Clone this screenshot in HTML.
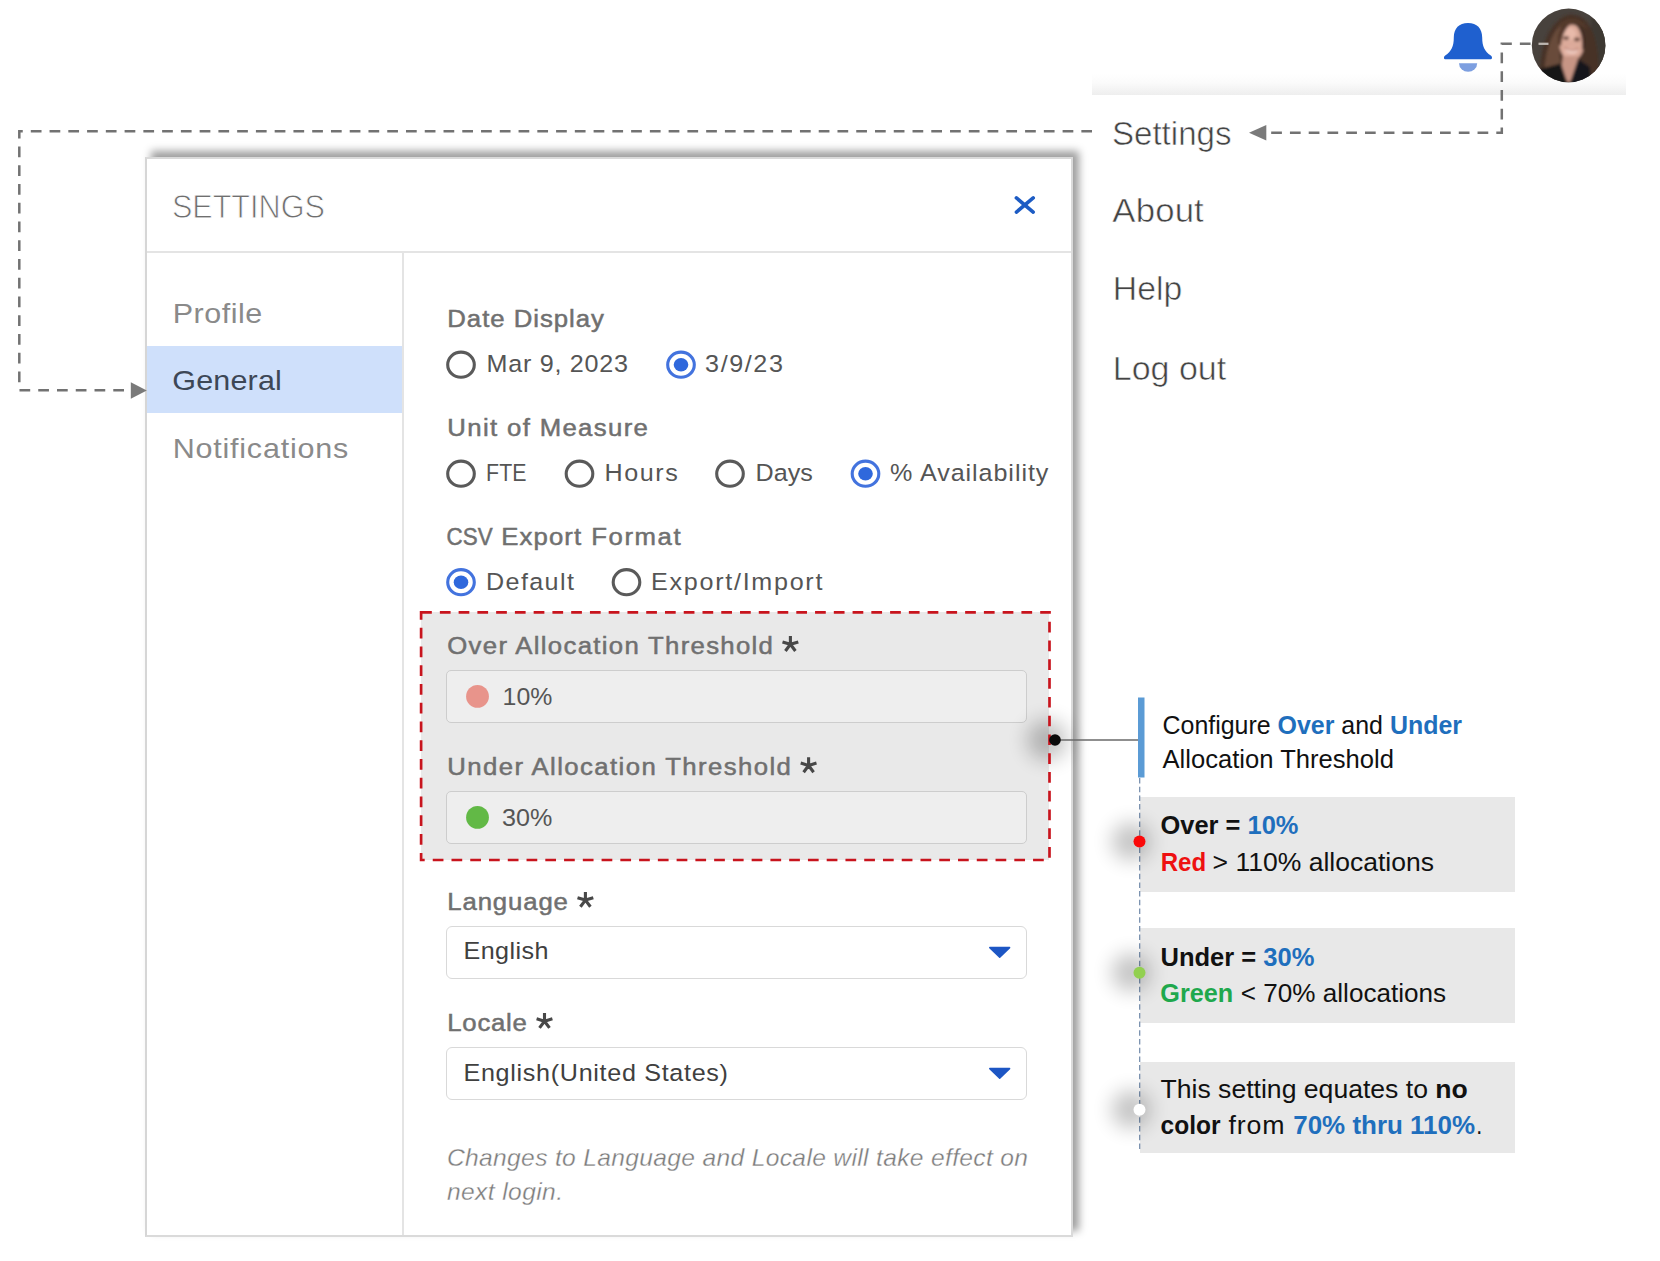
<!DOCTYPE html>
<html lang="en">
<head>
<meta charset="utf-8">
<title>Settings</title>
<style>
  html, body { margin:0; padding:0; background:#ffffff; }
  body { width:1660px; height:1261px; position:relative; overflow:hidden;
         font-family:"Liberation Sans", sans-serif; }
  .abs { position:absolute; }
  #topband { left:1092px; top:74px; width:534px; height:20.5px;
             background:linear-gradient(to bottom, #ffffff 0%, #fbfbfb 40%, #eeeeee 100%); }
  #dialog { left:145px; top:157px; width:923.5px; height:1076px; background:#fff;
            border:2px solid #dadada; border-left-color:#d6d6d6;
            box-shadow: 6px -6px 8px 0 rgba(0,0,0,0.38); }
  #dlg-head { left:147px; top:158.5px; width:923.5px; height:92px; border-bottom:2px solid #e4e4e4; background:#fff; }
  #side-border { left:402px; top:252px; width:2px; height:983px; background:#e4e4e4; }
  #side-active { left:147px; top:346px; width:255px; height:67px; background:#cfe0fb; }
  #redbox-fill { left:421px; top:612px; width:628px; height:248px; background:#e9e9e9; }
  .inp { left:446px; width:581px; height:51px; border:1px solid #cdcdcd; border-radius:5px; box-sizing:border-box; }
  .inp.g { background:#eeeeee; }
  .inp.w { background:#fff; border:1.5px solid #d9d9d9; border-radius:6px; }
  .note { left:1140px; width:375px; background:#e8e8e8; }
  svg#ov { left:0; top:0; }
  svg text { font-family:"Liberation Sans", sans-serif; }
</style>
</head>
<body>
<div class="abs" id="topband"></div>

<div class="abs" id="dialog"></div>
<div class="abs" id="dlg-head"></div>
<div class="abs" id="side-border"></div>
<div class="abs" id="side-active"></div>
<div class="abs" id="redbox-fill"></div>
<div class="abs inp g" style="top:670px; height:53px;"></div>
<div class="abs inp g" style="top:791px; height:53px;"></div>
<div class="abs inp w" style="top:925.7px; height:53px;"></div>
<div class="abs inp w" style="top:1046.7px; height:53px;"></div>

<div class="abs note" style="top:797px; height:95px;"></div>
<div class="abs note" style="top:928px; height:95px;"></div>
<div class="abs note" style="top:1062px; height:91px;"></div>

<svg id="ov" class="abs" width="1660" height="1261" viewBox="0 0 1660 1261">
  <defs>
    <filter id="blur1" x="-20%" y="-20%" width="140%" height="140%"><feGaussianBlur stdDeviation="1.6"/></filter>
    <filter id="blur10" x="-150%" y="-150%" width="400%" height="400%"><feGaussianBlur stdDeviation="10"/></filter>
    <clipPath id="avclip"><circle cx="1568.6" cy="45.4" r="36.8"/></clipPath>
  </defs>

  <!-- ===== connector dashed lines ===== -->
  <g fill="none" stroke="#727272" stroke-width="2.5" stroke-dasharray="10.72 8.04">
    <path d="M1260 132.8 H1501.8 V43.8 H1548" stroke-dashoffset="7.58"/>
    <path d="M140 390.2 H19.3 V131.2 H1092" stroke-dashoffset="2.76"/>
  </g>
  <path d="M1249 132.8 L1266.3 125 V140.6 Z" fill="#7a7a7a"/>
  <path d="M146.8 390.5 L130.8 382.3 V398.7 Z" fill="#7a7a7a"/>

  <!-- ===== bell ===== -->
  <g id="bell">
    <path d="M1459 63.2 H1477.2 A9.1 8.7 0 0 1 1459 63.2 Z" fill="#7d9fe0"/>
    <path d="M1445 59.2 C1443.6 59.2 1443.6 56.6 1445.2 55.6 C1451.4 51.2 1453.8 46.6 1453.8 37.5 C1453.8 28.4 1459 23 1468 23 C1477 23 1482.2 28.4 1482.2 37.5 C1482.2 46.6 1484.6 51.2 1490.8 55.6 C1492.4 56.6 1492.4 59.2 1491 59.2 Z" fill="#1f60cf"/>
  </g>

  <!-- ===== avatar ===== -->
  <g id="avatar" clip-path="url(#avclip)">
    <rect x="1530" y="6" width="78" height="80" fill="#48423d"/>
    <g filter="url(#blur1)">
      <path d="M1592 8 H1610 V88 H1588 Z" fill="#3c3733"/>
      <path d="M1540 88 C1537 60 1545 22 1568 15 C1593 11 1601 46 1598 88 Z" fill="#463126"/>
      <path d="M1545 80 C1543 56 1551 32 1563 22 C1558 40 1559 60 1563 80 Z" fill="#694b3b"/>
      <path d="M1556 30 C1560 16 1582 14 1588 30 C1580 23 1566 22 1556 30 Z" fill="#553a2c"/>
      <ellipse cx="1571.8" cy="42.6" rx="12.6" ry="17.8" fill="#dcaa9a"/>
      <ellipse cx="1568.5" cy="34" rx="7.5" ry="6.5" fill="#e8baaa"/>
      <ellipse cx="1570" cy="52" rx="7" ry="5" fill="#e3b3a4"/>
      <path d="M1558 44 C1557 30 1563 23 1573 22 C1566 27 1562 34 1561 46 Z" fill="#523729"/>
      <path d="M1585 48 C1587 34 1583 25 1573 22 C1580 28 1583 36 1582 50 Z" fill="#402c21"/>
      <path d="M1563 56 L1578 56 L1578 66 L1569 84 L1561 70 Z" fill="#c79585"/>
      <path d="M1534 88 L1540 69 L1561 63.5 L1569 88 Z" fill="#121215"/>
      <path d="M1578 59 L1590 67 L1591 88 L1566 88 L1571 80 Z" fill="#15151a"/>
      <ellipse cx="1566.2" cy="38" rx="3" ry="1.8" fill="#5e4036"/>
      <ellipse cx="1577" cy="39.4" rx="3" ry="1.8" fill="#5e4036"/>
      <path d="M1566 49.5 Q1571.5 54.5 1577.5 50.5" stroke="#f0d2c8" stroke-width="2" fill="none"/>
      <path d="M1564.5 47.5 Q1571 52 1578.5 48.5" stroke="#b67a6c" stroke-width="1.1" fill="none"/>
    </g>
  </g>
  <path d="M1538.5 43.8 H1548.5" stroke="#bdb6b0" stroke-width="2.3"/>

  <!-- ===== close X ===== -->
  <g stroke="#1d5cc4" stroke-width="3.6" stroke-linecap="round">
    <path d="M1016.4 197.9 L1033.2 212.1"/>
    <path d="M1033.2 197.9 L1016.4 212.1"/>
  </g>

  <!-- ===== asterisks ===== -->
  <g stroke="#484848" stroke-width="3.1" stroke-linecap="butt" fill="none">
    <path transform="translate(790.4 644.3)" d="M0 -8.2 V0 M0 0 L-7.9 -2.4 M0 0 L7.9 -2.4 M0 0 L-5 6.7 M0 0 L5 6.7"/>
    <path transform="translate(808.6 765.5)" d="M0 -8.2 V0 M0 0 L-7.9 -2.4 M0 0 L7.9 -2.4 M0 0 L-5 6.7 M0 0 L5 6.7"/>
    <path transform="translate(585.4 900.1)" d="M0 -8.2 V0 M0 0 L-7.9 -2.4 M0 0 L7.9 -2.4 M0 0 L-5 6.7 M0 0 L5 6.7"/>
    <path transform="translate(544.5 1021.2)" d="M0 -8.2 V0 M0 0 L-7.9 -2.4 M0 0 L7.9 -2.4 M0 0 L-5 6.7 M0 0 L5 6.7"/>
  </g>

  <!-- ===== radios ===== -->
  <g fill="#fff" stroke="#5a5a5a" stroke-width="3.1">
    <ellipse cx="461" cy="364.7" rx="13.3" ry="12.6"/>
    <ellipse cx="461" cy="473.7" rx="13.3" ry="12.6"/>
    <ellipse cx="579.5" cy="473.7" rx="13.3" ry="12.6"/>
    <ellipse cx="730" cy="473.7" rx="13.3" ry="12.6"/>
    <ellipse cx="626.5" cy="582.2" rx="13.3" ry="12.6"/>
  </g>
  <g fill="#fff" stroke="#4373de" stroke-width="3.1">
    <ellipse cx="681" cy="364.7" rx="13.3" ry="12.6"/>
    <ellipse cx="865.5" cy="473.7" rx="13.3" ry="12.6"/>
    <ellipse cx="461" cy="582.2" rx="13.3" ry="12.6"/>
  </g>
  <g fill="#2f68dc">
    <ellipse cx="681" cy="364.8" rx="7.3" ry="6.8"/>
    <ellipse cx="865.5" cy="473.8" rx="7.3" ry="6.8"/>
    <ellipse cx="461" cy="582.3" rx="7.3" ry="6.8"/>
  </g>

  <!-- ===== red dashed threshold box ===== -->
  <circle cx="1047" cy="740" r="20" fill="#000" opacity="0.24" filter="url(#blur10)"/>
  <rect x="421.1" y="612.4" width="628.4" height="247.6" fill="none" stroke="#c8141d" stroke-width="2.67" stroke-dasharray="10.72 8.04" stroke-dashoffset="0"/>
  <circle cx="477.5" cy="696.4" r="11.4" fill="#e8948b"/>
  <circle cx="477.5" cy="817.4" r="11.4" fill="#62b946"/>

  <!-- ===== select arrows ===== -->
  <path d="M989.8 947.6 H1009.6 L999.7 957.1 Z" fill="#1d56c4" stroke="#1d56c4" stroke-width="1.5" stroke-linejoin="round"/>
  <path d="M989.8 1068.6 H1009.6 L999.7 1078.1 Z" fill="#1d56c4" stroke="#1d56c4" stroke-width="1.5" stroke-linejoin="round"/>

  <!-- ===== callout ===== -->
  <path d="M1055 740 H1138" stroke="#6a6a6a" stroke-width="1.6"/>
  <circle cx="1055" cy="740" r="5.8" fill="#0a0a0a"/>
  <rect x="1138" y="697.5" width="6.5" height="80" fill="#5b9bd5"/>
  <path d="M1139.7 778 V1152" stroke="#6f88a8" stroke-width="1.2" stroke-dasharray="5.5 3.2"/>

  <circle cx="1131" cy="841.5" r="19" fill="#000" opacity="0.23" filter="url(#blur10)"/>
  <circle cx="1131" cy="972.5" r="19" fill="#000" opacity="0.23" filter="url(#blur10)"/>
  <circle cx="1131" cy="1109.5" r="19" fill="#000" opacity="0.23" filter="url(#blur10)"/>
  <circle cx="1139.5" cy="841.5" r="6" fill="#fb0909"/>
  <circle cx="1139.5" cy="972.7" r="6" fill="#92d050"/>
  <circle cx="1139.5" cy="1109.8" r="6" fill="#ffffff"/>

  <!-- ===== all text ===== -->
  <text transform="translate(1112 144.5) scale(1.0176 1)" font-size="32.5" fill="#444" stroke="#fff" stroke-width="0.55" paint-order="fill stroke">Settings</text>
  <text transform="translate(1112.3 221.5) scale(1.0700 1)" font-size="32.5" fill="#444" textLength="85.51" lengthAdjust="spacing" stroke="#fff" stroke-width="0.55" paint-order="fill stroke">About</text>
  <text transform="translate(1112.8 299.5) scale(1.0382 1)" font-size="32.5" fill="#444" stroke="#fff" stroke-width="0.55" paint-order="fill stroke">Help</text>
  <text transform="translate(1112.8 379.5) scale(1.0458 1)" font-size="32.5" fill="#444" stroke="#fff" stroke-width="0.55" paint-order="fill stroke">Log out</text>
  <text transform="translate(171.9 217.6) scale(0.8998 1)" font-size="34" fill="#6f6f6f" stroke="#fff" stroke-width="0.9" paint-order="fill stroke">SETTINGS</text>
  <text transform="translate(172.7 322.5) scale(1.0700 1)" font-size="28.5" fill="#8a8a8a" textLength="83.64" lengthAdjust="spacing">Profile</text>
  <text transform="translate(172.3 390.2) scale(1.0700 1)" font-size="28.5" fill="#3d4756" textLength="102.34" lengthAdjust="spacing">General</text>
  <text transform="translate(172.7 458) scale(1.0700 1)" font-size="28.5" fill="#8a8a8a" textLength="164.02" lengthAdjust="spacing">Notifications</text>
  <text transform="translate(447.3 327.3) scale(1.1000 1)" font-size="23.4" fill="#707070" textLength="142.36" lengthAdjust="spacing" stroke="#707070" stroke-width="0.5">Date Display</text>
  <text transform="translate(447.3 436.3) scale(1.1000 1)" font-size="23.4" fill="#707070" textLength="182.36" lengthAdjust="spacing" stroke="#707070" stroke-width="0.5">Unit of Measure</text>
  <text transform="translate(446.6 545.3) scale(0.9562 1)" font-size="23.4" fill="#707070" stroke="#707070" stroke-width="0.5">CSV</text>
  <text transform="translate(501.2 545.3) scale(1.1000 1)" font-size="23.4" fill="#707070" textLength="72.73" lengthAdjust="spacing" stroke="#707070" stroke-width="0.5">Export</text>
  <text transform="translate(591.2 545.3) scale(1.1000 1)" font-size="23.4" fill="#707070" textLength="81.27" lengthAdjust="spacing" stroke="#707070" stroke-width="0.5">Format</text>
  <text transform="translate(447.3 653.9) scale(1.1000 1)" font-size="23.4" fill="#707070" textLength="296.00" lengthAdjust="spacing" stroke="#707070" stroke-width="0.5">Over Allocation Threshold</text>
  <text transform="translate(447.3 775.1) scale(1.1000 1)" font-size="23.4" fill="#707070" textLength="312.36" lengthAdjust="spacing" stroke="#707070" stroke-width="0.5">Under Allocation Threshold</text>
  <text transform="translate(447.3 909.6) scale(1.1000 1)" font-size="23.4" fill="#707070" textLength="109.64" lengthAdjust="spacing" stroke="#707070" stroke-width="0.5">Language</text>
  <text transform="translate(447.3 1030.7) scale(1.1000 1)" font-size="23.4" fill="#707070" textLength="72.36" lengthAdjust="spacing" stroke="#707070" stroke-width="0.5">Locale</text>
  <text transform="translate(486.6 372) scale(1.0700 1)" font-size="23.5" fill="#555" textLength="132.06" lengthAdjust="spacing">Mar 9, 2023</text>
  <text transform="translate(705.1 372) scale(1.0700 1)" font-size="23.5" fill="#555" textLength="72.71" lengthAdjust="spacing">3/9/23</text>
  <text transform="translate(486.1 481) scale(0.9078 1)" font-size="23.5" fill="#555">FTE</text>
  <text transform="translate(604.6 481) scale(1.0700 1)" font-size="23.5" fill="#555" textLength="68.50" lengthAdjust="spacing">Hours</text>
  <text transform="translate(755.6 481) scale(1.0700 1)" font-size="23.5" fill="#555" textLength="53.55" lengthAdjust="spacing">Days</text>
  <text transform="translate(890.1 481) scale(1.0700 1)" font-size="23.5" fill="#555" textLength="147.94" lengthAdjust="spacing">% Availability</text>
  <text transform="translate(486.1 590) scale(1.0700 1)" font-size="23.5" fill="#555" textLength="82.06" lengthAdjust="spacing">Default</text>
  <text transform="translate(651.1 590) scale(1.0700 1)" font-size="23.5" fill="#555" textLength="160.09" lengthAdjust="spacing">Export/Import</text>
  <text transform="translate(502.6 704.8) scale(1.0585 1)" font-size="23.5" fill="#555">10%</text>
  <text transform="translate(502.1 826) scale(1.0691 1)" font-size="23.5" fill="#555">30%</text>
  <text transform="translate(463.5 959) scale(1.0700 1)" font-size="23.5" fill="#404040" textLength="79.44" lengthAdjust="spacing">English</text>
  <text transform="translate(463.5 1080.5) scale(1.0700 1)" font-size="23.5" fill="#404040" textLength="247.20" lengthAdjust="spacing">English(United States)</text>
  <text transform="translate(447 1165.5) scale(1.0700 1)" font-size="23" fill="#7c7c7c" textLength="542.99" lengthAdjust="spacing" font-style="italic" stroke="#fff" stroke-width="0.3" paint-order="fill stroke">Changes to Language and Locale will take effect on</text>
  <text transform="translate(447 1199.5) scale(1.0700 1)" font-size="23" fill="#7c7c7c" textLength="108.41" lengthAdjust="spacing" font-style="italic" stroke="#fff" stroke-width="0.3" paint-order="fill stroke">next login.</text>
  <text transform="translate(1162.5 734) scale(0.9977 1)" font-size="25" fill="#111">Configure <tspan font-weight="bold" fill="#1f6fbd">Over</tspan> and <tspan font-weight="bold" fill="#1f6fbd">Under</tspan></text>
  <text transform="translate(1162.5 768) scale(1.0241 1)" font-size="25" fill="#111">Allocation Threshold</text>
  <text transform="translate(1160.5 834) scale(1.0182 1)" font-size="25" fill="#111" font-weight="bold">Over = <tspan fill="#1f6fbd">10%</tspan></text>
  <text transform="translate(1160.7 870.5) scale(0.9612 1)" font-size="25" fill="#ee1111" font-weight="bold">Red</text>
  <text transform="translate(1212.6 870.5) scale(1.0617 1)" font-size="25" fill="#111">&gt; 110% allocations</text>
  <text transform="translate(1160.5 965.5) scale(1.0213 1)" font-size="25" fill="#111" font-weight="bold">Under = <tspan fill="#1f6fbd">30%</tspan></text>
  <text transform="translate(1160.3 1001.6) scale(1.0102 1)" font-size="25" fill="#1fa84d" font-weight="bold">Green</text>
  <text transform="translate(1240.8 1001.6) scale(1.0450 1)" font-size="25" fill="#111">&lt; 70% allocations</text>
  <text transform="translate(1160.5 1098) scale(1.0639 1)" font-size="25" fill="#111">This setting equates to <tspan font-weight="bold">no</tspan></text>
  <text transform="translate(1160.5 1133.8) scale(0.9816 1)" font-size="25" fill="#111" font-weight="bold">color</text>
  <text transform="translate(1228.5 1133.8) scale(1.0700 1)" font-size="25" fill="#111" textLength="52.34" lengthAdjust="spacing">from</text>
  <text transform="translate(1293.2 1133.8) scale(1.0394 1)" font-size="25" fill="#1f6fbd" font-weight="bold">70% thru 110%</text>
  <text transform="translate(1476.3 1133.8) scale(0.8629 1)" font-size="25" fill="#111">.</text>
</svg>
</body>
</html>
